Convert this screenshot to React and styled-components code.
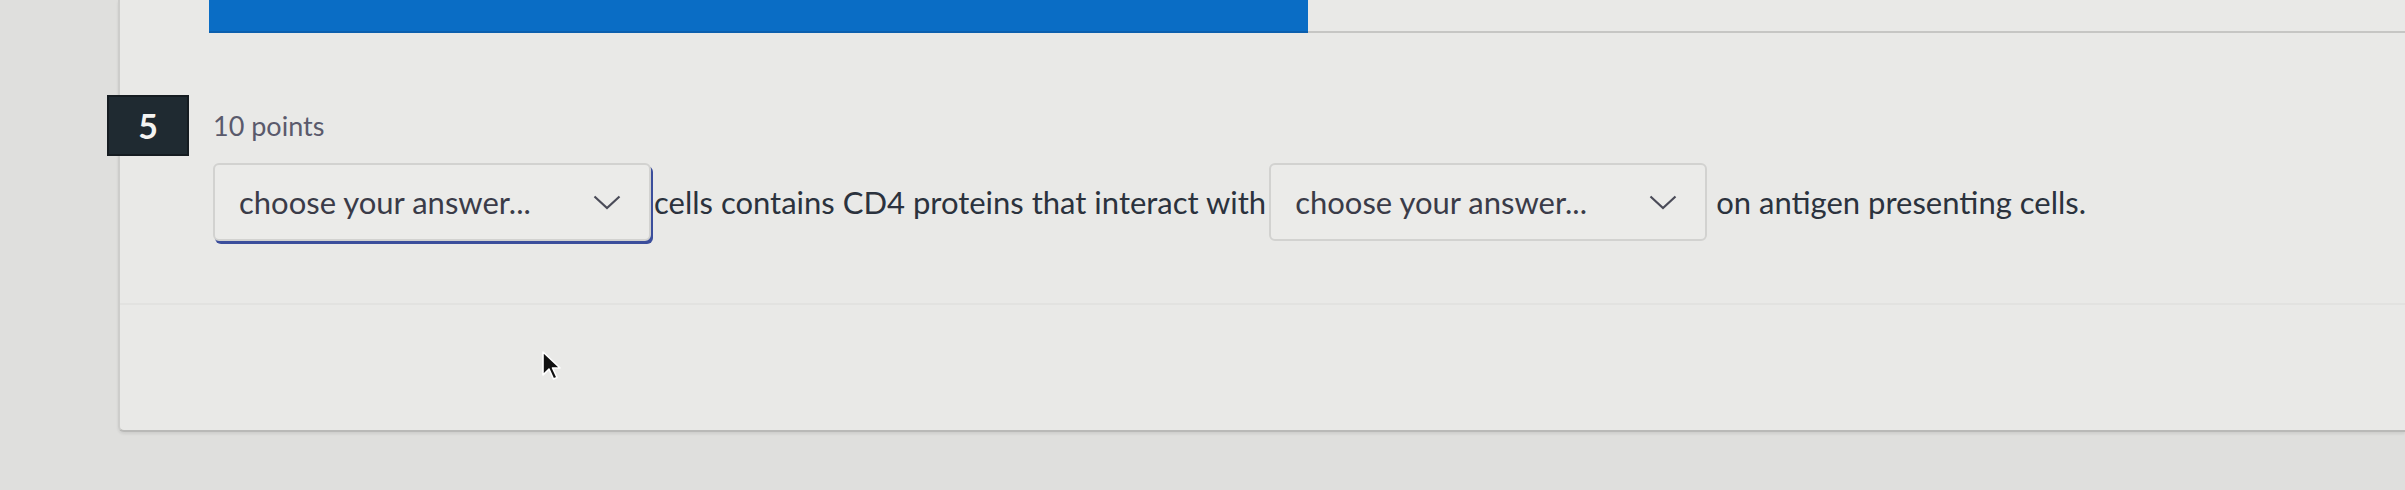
import React from "react";
import styled, { createGlobalStyle } from "styled-components";

const GlobalStyle = createGlobalStyle`
  html, body {
    margin: 0;
    padding: 0;
    background: #dfdfdd;
    font-family: Lato, "Open Sans", "Liberation Sans", sans-serif;
  }
  body {
    width: 2405px;
    height: 490px;
    overflow: hidden;
  }
`;

const Page = styled.div`
  width: 2405px;
  height: 490px;
  background: #dfdfdd;
`;

const Card = styled.div`
  position: relative;
  margin-left: 118px;
  height: 432px;
  box-sizing: border-box;
  background: #e9e9e7;
  border-left: 2px solid #cdcdcb;
  border-bottom: 2px solid #b9b9b7;
  border-bottom-left-radius: 6px;
  box-shadow: 0 2px 3px rgba(0, 0, 0, 0.08);
`;

const ProgressTrack = styled.div`
  margin-left: 89px;
  height: 31px;
  border-bottom: 2px solid #c6c6c4;
  display: flex;
`;

const ProgressFill = styled.div`
  width: ${(p) => p.$width}px;
  background: #0a6dc5;
  border-bottom: 2px solid #0b5fae;
  margin-bottom: -2px;
`;

const NumberBadge = styled.div`
  position: absolute;
  left: -13px;
  top: 95px;
  width: 82px;
  height: 61px;
  box-sizing: border-box;
  background: #1f2a31;
  border: 2px solid #151c21;
  color: #f4f4f2;
  font-weight: 700;
  font-size: 34px;
  display: flex;
  align-items: center;
  justify-content: center;
`;

const Points = styled.div`
  margin-top: 78px;
  padding-left: 93px;
  height: 30px;
  line-height: 30px;
  font-size: 27px;
  color: #5a5a6c;
`;

const AnswerRow = styled.div`
  margin-top: 22px;
  padding-left: 93px;
  display: flex;
  align-items: center;
  font-size: 31px;
  color: #2b323d;
`;

const Select = styled.div`
  width: 438px;
  height: 78px;
  box-sizing: border-box;
  display: flex;
  align-items: center;
  justify-content: space-between;
  padding: 0 28px 0 24px;
  background: #ebebe9;
  border: 2px solid #d2d2d0;
  border-radius: 6px;
  color: #3a3b48;
  box-shadow: ${(p) => (p.$focused ? "2px 3px 0 #3b4e9c" : "none")};
  margin: ${(p) => p.$margin};
`;

const Phrase = styled.span`
  white-space: nowrap;
`;

const Divider = styled.div`
  margin-top: 62px;
  height: 2px;
  background: #e2e2e0;
`;

const Cursor = styled.svg`
  position: absolute;
  left: 421px;
  top: 350px;
`;

const Chevron = () => (
  <svg width="28" height="15" viewBox="0 0 28 15">
    <polyline
      points="1.5,1.5 14,13 26.5,1.5"
      fill="none"
      stroke="#4a4b58"
      strokeWidth="2.2"
    />
  </svg>
);

const Dropdown = ({ focused, margin }) => (
  <Select $focused={focused} $margin={margin}>
    <span>choose your answer...</span>
    <Chevron />
  </Select>
);

export default function App() {
  return (
    <Page>
      <GlobalStyle />
      <Card>
        <ProgressTrack>
          <ProgressFill $width={1099} />
        </ProgressTrack>
        <NumberBadge>5</NumberBadge>
        <Points>10 points</Points>
        <AnswerRow>
          <Dropdown focused margin="0 3px 0 0" />
          <Phrase>cells contains CD4 proteins that interact with</Phrase>
          <Dropdown margin="0 9px 0 3px" />
          <Phrase>on antigen presenting cells.</Phrase>
        </AnswerRow>
        <Divider />
        <Cursor width="22" height="32" viewBox="0 0 22 32">
          <path
            d="M2 2 L2 25 L8 19 L12.5 29 L16 27.5 L11.5 18 L19 18 Z"
            fill="#111"
            stroke="#fff"
            strokeWidth="1.6"
            strokeLinejoin="round"
          />
        </Cursor>
      </Card>
    </Page>
  );
}
